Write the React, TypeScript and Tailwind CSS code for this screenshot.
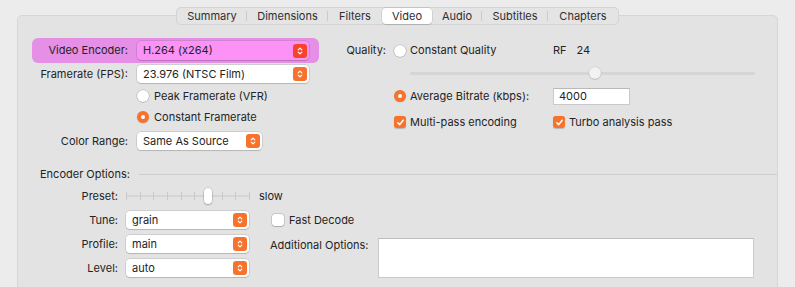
import React from "react";

const tabs = [
  { label: "Summary", w: "w-[70px]" },
  { label: "Dimensions", w: "w-[81px]" },
  { label: "Filters", w: "w-[54px]" },
  { label: "Video", w: "w-[50px]", active: true },
  { label: "Audio", w: "w-[50px]" },
  { label: "Subtitles", w: "w-[66px]" },
  { label: "Chapters", w: "w-[70px]" },
];

function Chevrons() {
  return (
    <svg width="8" height="10" viewBox="0 0 8 10" fill="none" aria-hidden="true">
      <path d="M2.2 3.9 L4 2.1 L5.8 3.9" stroke="white" strokeWidth="1.2" strokeLinecap="round" strokeLinejoin="round" />
      <path d="M2.2 6.1 L4 7.9 L5.8 6.1" stroke="white" strokeWidth="1.2" strokeLinecap="round" strokeLinejoin="round" />
    </svg>
  );
}

function Popup({ value, width, pink }: { value: string; width: string; pink?: boolean }) {
  return (
    <div
      className={`${width} ${pink ? "h-[19px] bg-[#fd92f6]" : "h-[18px] bg-white"} relative flex items-center rounded-[4px] pl-[6px] shadow-[0_0_0_0.5px_rgba(0,0,0,0.18),0_1px_1px_rgba(0,0,0,0.12)]`}
    >
      <span>{value}</span>
      <div
        className={`absolute right-[2px] top-1/2 -translate-y-1/2 flex h-[14px] w-[14px] items-center justify-center rounded-[3px] ${pink ? "bg-[#f8432c]" : "bg-[#f6722d]"}`}
      >
        <Chevrons />
      </div>
    </div>
  );
}

function Radio({ on }: { on?: boolean }) {
  return on ? (
    <div className="flex h-[12px] w-[12px] items-center justify-center rounded-full bg-[#f6722d] shadow-[0_0.5px_1px_rgba(0,0,0,0.2)]">
      <div className="h-[4px] w-[4px] rounded-full bg-white" />
    </div>
  ) : (
    <div className="h-[12px] w-[12px] rounded-full bg-white shadow-[0_0_0_0.5px_rgba(0,0,0,0.22),0_0.5px_1px_rgba(0,0,0,0.15)]" />
  );
}

function Check({ on }: { on?: boolean }) {
  return on ? (
    <div className="flex h-[12px] w-[12px] items-center justify-center rounded-[3px] bg-[#f6722d] shadow-[0_0.5px_1px_rgba(0,0,0,0.2)]">
      <svg width="9" height="9" viewBox="0 0 9 9" fill="none" aria-hidden="true">
        <path d="M1.8 4.7 L3.7 6.6 L7.2 2.2" stroke="white" strokeWidth="1.5" strokeLinecap="round" strokeLinejoin="round" />
      </svg>
    </div>
  ) : (
    <div className="h-[12px] w-[12px] rounded-[3px] bg-white shadow-[0_0_0_0.5px_rgba(0,0,0,0.22),0_0.5px_1px_rgba(0,0,0,0.15)]" />
  );
}

function PresetSlider() {
  const ticks = Array.from({ length: 10 });
  return (
    <div className="relative flex h-[16px] w-[124px] items-center justify-between">
      <div className="absolute left-0 right-0 top-1/2 h-[2px] -translate-y-1/2 bg-[#d6d6d6]" />
      {ticks.map((_, i) => (
        <div key={i} className="relative h-[8px] w-[1px] bg-[#c9c9c9]" />
      ))}
      <div className="absolute left-[78px] top-0 h-[16px] w-[8px] rounded-full bg-white shadow-[0_0_0_0.5px_rgba(0,0,0,0.2),0_1px_2px_rgba(0,0,0,0.2)]" />
    </div>
  );
}

export default function App() {
  return (
    <div
      className="h-[287px] w-[795px] overflow-hidden bg-[#ececec] text-[11px] leading-[13px] text-[#232323]"
      style={{ fontFamily: "Inter, 'Noto Sans', sans-serif" }}
    >
      {/* tab strip */}
      <div className="relative z-10 flex justify-center pt-[7px]">
        <div className="flex h-[18px] items-center rounded-[5px] border border-[#d3d3d3] bg-[#e4e4e4]">
          {tabs.map((t, i) => {
            const next = tabs[i + 1];
            const sep = !t.active && next && !next.active && i < tabs.length - 1;
            return (
              <div
                key={t.label}
                className={`${t.w} relative flex h-[16px] items-center justify-center text-[#2e2e2e] ${
                  t.active ? "rounded-[4px] bg-white shadow-[0_0_0_0.5px_rgba(0,0,0,0.15),0_1px_1px_rgba(0,0,0,0.1)]" : ""
                }`}
              >
                {t.label}
                {sep && <div className="absolute right-0 top-[3px] h-[10px] w-[1px] bg-[#cacaca]" />}
              </div>
            );
          })}
        </div>
      </div>

      {/* panel */}
      <div className="mx-[17px] -mt-[10px] h-[300px] w-[761px] rounded-[5px] border border-[#d6d6d6] bg-[#e3e3e3] pl-[14px] pt-[22px]">
        <div className="flex">
          {/* left column */}
          <div className="flex w-[305px] flex-col">
            <div className="flex h-[25px] w-[287px] items-center rounded-[6px] bg-[#e590e6]">
              <span className="w-[96px] text-right">Video Encoder:</span>
              <div className="ml-[9px]">
                <Popup value="H.264 (x264)" width="w-[172px]" pink />
              </div>
            </div>
            <div className="mt-[2px] flex h-[18px] items-center">
              <span className="w-[96px] text-right">Framerate (FPS):</span>
              <div className="ml-[9px]">
                <Popup value="23.976 (NTSC Film)" width="w-[172px]" />
              </div>
            </div>
            <div className="mt-[4px] flex h-[18px] items-center pl-[105px]">
              <Radio />
              <span className="ml-[5px]">Peak Framerate (VFR)</span>
            </div>
            <div className="mt-[3px] flex h-[18px] items-center pl-[105px]">
              <Radio on />
              <span className="ml-[5px]">Constant Framerate</span>
            </div>
            <div className="mt-[6px] flex h-[18px] items-center">
              <span className="w-[96px] text-right">Color Range:</span>
              <div className="ml-[9px]">
                <Popup value="Same As Source" width="w-[125px]" />
              </div>
            </div>
          </div>

          {/* right column */}
          <div className="flex flex-col">
            <div className="flex h-[25px] items-center">
              <span className="w-[49px] text-right">Quality:</span>
              <div className="ml-[8px] flex w-[159px] items-center">
                <Radio />
                <span className="ml-[4px]">Constant Quality</span>
              </div>
              <span>RF</span>
              <span className="ml-[10px]">24</span>
            </div>
            <div className="relative ml-[73px] mt-[4px] flex h-[12px] w-[345px] items-center">
              <div className="h-[3px] w-full rounded-full bg-[#d5d5d5]" />
              <div className="absolute left-[179px] top-0 h-[12px] w-[12px] rounded-full bg-[#f2f2f2] shadow-[0_0_0_0.5px_rgba(0,0,0,0.12),0_1px_1px_rgba(0,0,0,0.12)]" />
            </div>
            <div className="ml-[57px] mt-[8px] flex h-[18px] items-center">
              <Radio on />
              <span className="ml-[4px] w-[143px]">Average Bitrate (kbps):</span>
              <div className="flex h-[17px] w-[77px] items-center border border-[#c9c9c9] border-t-[#b9b9b9] bg-white pl-[5px]">
                4000
              </div>
            </div>
            <div className="ml-[57px] mt-[8px] flex h-[18px] items-center">
              <Check on />
              <span className="ml-[4px] w-[143px]">Multi-pass encoding</span>
              <Check on />
              <span className="ml-[4px]">Turbo analysis pass</span>
            </div>
          </div>
        </div>

        {/* encoder options */}
        <div className="ml-[8px] mt-[17px] flex h-[14px] items-center">
          <span>Encoder Options:</span>
          <div className="ml-[9px] h-[1px] flex-1 bg-[#cfcfcf]" />
        </div>
        <div className="mt-[7px] flex h-[16px] items-center">
          <span className="w-[86px] text-right">Preset:</span>
          <div className="ml-[8px]">
            <PresetSlider />
          </div>
          <span className="ml-[9px]">slow</span>
        </div>

        <div className="mt-[7px] flex">
          <div className="flex w-[238px] flex-col gap-[6px]">
            {[
              ["Tune:", "grain"],
              ["Profile:", "main"],
              ["Level:", "auto"],
            ].map(([label, value]) => (
              <div key={label} className="flex h-[18px] items-center">
                <span className="w-[86px] text-right">{label}</span>
                <div className="ml-[8px]">
                  <Popup value={value} width="w-[123px]" />
                </div>
              </div>
            ))}
          </div>
          <div className="flex flex-col">
            <div className="flex h-[18px] items-center pl-[2px]">
              <Check />
              <span className="ml-[5px]">Fast Decode</span>
            </div>
            <div className="mt-[9px] flex">
              <span className="w-[108px] pt-[1px]">Additional Options:</span>
              <div className="h-[40px] w-[376px] border border-[#cacaca] border-t-[#bcbcbc] bg-white" />
            </div>
          </div>
        </div>
      </div>
    </div>
  );
}
